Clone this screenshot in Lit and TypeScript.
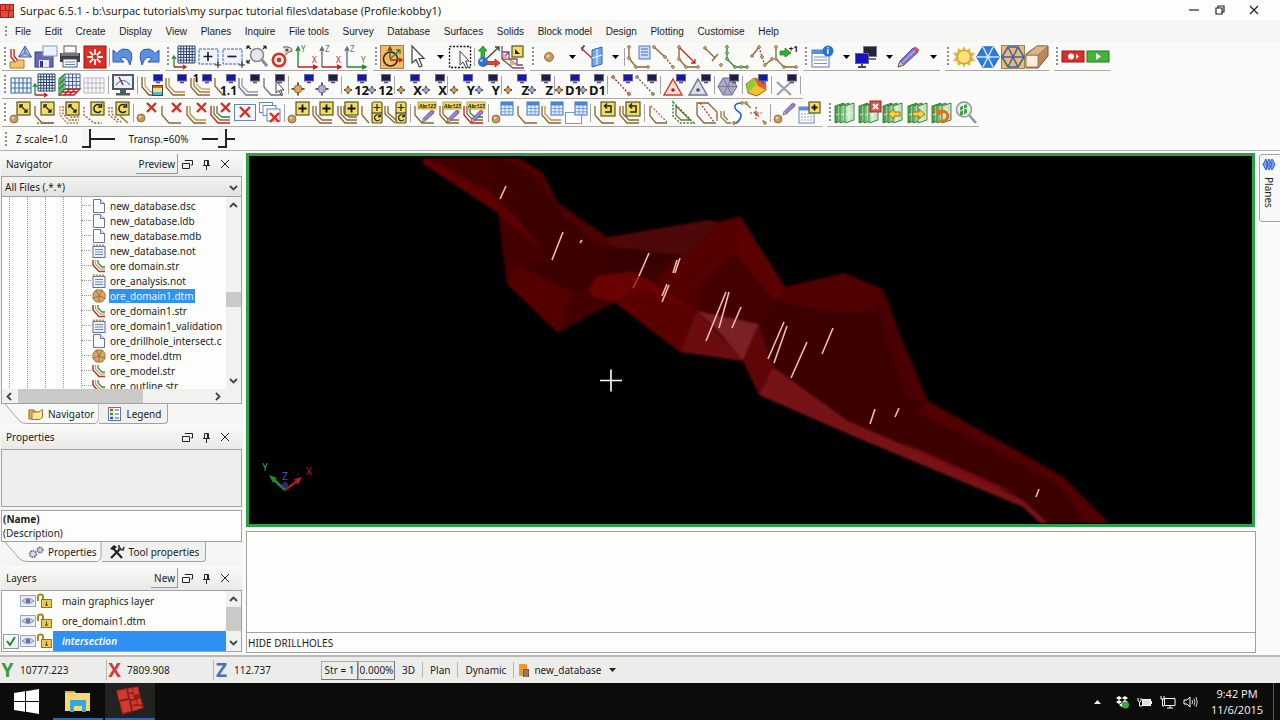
import { LitElement, html, svg, css, nothing } from "lit";
import { customElement, property } from "lit/decorators.js";
import { classMap } from "lit/directives/class-map.js";

/* ---------- icon building blocks (24 x 24 grid) ---------- */
const BR = "#8a6532";
const GY = "#6c7080";
const line = (d: string, c = BR, w = 1.3, dash = "") =>
  svg`<path d=${d} fill="none" stroke=${c} stroke-width=${w} stroke-dasharray=${dash || "none"}/>`;
const bend = (cols: string[], dash = "", top = 5) =>
  cols.map((c, i) => line(`M${2 + 3 * i} ${top}V${14 - i}L${9 + 2 * i} ${22 - 3 * i}H${21}`, c, 1.3, dash));
const mon = (on: boolean) => svg`
  <rect x="13.5" y="1.5" width="9" height="6.5" fill=${on ? "#1515b8" : "#1d1d45"} stroke="#6b6c8c"/>
  <path d="M16 9.5H20" stroke="#55566a" stroke-width="1.6"/>`;
const ball = (x: number, y: number, r = 4) => svg`
  <circle cx=${x} cy=${y} r=${r} fill="#c79a61" stroke="#84602f" stroke-width=".8"/>
  <circle cx=${x - 1} cy=${y - 1} r=${r / 3} fill="#efd3a6"/>`;
const tag = (x: number, y: number, s = 13) => svg`
  <rect x=${x} y=${y} width=${s} height=${s} fill="#f1dd62" stroke="#5d5320" stroke-width="1.2"/>`;
const redX = (x: number, y: number, s = 9) =>
  svg`<path d="M${x} ${y}l${s} ${s}M${x + s} ${y}l${-s} ${s}" stroke="#dc2a20" stroke-width="2.4"/>`;
const diamond = (x: number, y: number, r: number, on: boolean) => svg`
  <path d="M${x - r} ${y}H${x + r}M${x} ${y - r}V${y + r}" stroke="#33281a" stroke-width="1.5"/>
  <circle cx=${x} cy=${y} r=${r * 0.6} fill=${on ? "#e2a45e" : "#a9aed0"} stroke=${on ? "#85551f" : "#5d6080"} stroke-width=".8"/>`;
const label = (t: string, x: number, y = 22, s = 13) =>
  svg`<text x=${x} y=${y} font-size=${s} font-weight="700" fill="#111" text-anchor="end">${t}</text>`;
const table = (x: number, y: number) => svg`
  <rect x=${x} y=${y} width="12" height="13" fill="#e8f1ff" stroke="#3f6fc4"/>
  <rect x=${x} y=${y} width="12" height="3.5" fill="#4a83dc"/>
  <path d="M${x} ${y + 6.5}h12M${x} ${y + 9.8}h12M${x + 4} ${y + 3}v10M${x + 8} ${y + 3}v10" stroke="#6f97d8" stroke-width=".9"/>`;
const pencil = (x: number, y: number, k = 1) => svg`
  <g transform="translate(${x} ${y}) scale(${k})">
    <path d="M0 20L2 14L15 1L20 5L6 18Z" fill="#8672cc" stroke="#51449a" stroke-width=".9"/>
    <path d="M15 1L17.500 -.5L21.500 3L20 5Z" fill="#d9505c"/><path d="M0 20L2 14L6 18Z" fill="#e5c58f" stroke="#6c5a35" stroke-width=".8"/>
    <path d="M4.500 15.500L17 3.500" stroke="#b9aceb" stroke-width="1.4"/></g>`;
const hexagon = (fill: string, ray: string, edge: string) => svg`
  <path d="M7 2H17L23 12L17 22H7L1 12Z" fill=${fill} stroke=${edge} stroke-width="1.6"/>
  <path d="M7 2L17 22M17 2L7 22M1 12H23" stroke=${ray} stroke-width="1.5"/>`;
const axes = (v: string, h: string, vc: string, hc: string) => svg`
  <path d="M3 22V3M1 6L3 2L5 6" fill="none" stroke=${vc} stroke-width="1.4"/>
  <path d="M3 22H21M18 20L22 22L18 24" fill="none" stroke=${hc} stroke-width="1.4"/>
  <text x="6" y="7" font-size="8" fill=${vc}>${v}</text><text x="17" y="18" font-size="8" fill=${hc}>${h}</text>`;
const gridPath = (x: number, y: number, s: number, n: number, c: string) => {
  let d = "";
  for (let i = 0; i <= n; i++) {
    const p = (s * i) / n;
    d += `M${x + p} ${y}v${s}M${x} ${y + p}h${s}`;
  }
  return line(d, c, 1);
};
const scaleTag = (x: number, y: number) => svg`${tag(x, y)}
  <path d="M${x + 3} ${y + 3}l7 7M${x + 3} ${y + 6}v-3h3M${x + 10} ${y + 7}v3h-3" fill="none" stroke="#222" stroke-width="1.3"/>`;
const rotTag = (x: number, y: number) => svg`${tag(x, y)}
  <path d="M${x + 10} ${y + 9}a4 4 0 1 1 -.5 -5.500M${x + 10.500} ${y + 1.500}v3.500h-3.500" fill="none" stroke="#222" stroke-width="1.5"/>`;
const plusTag = (x: number, y: number, s = 13) => svg`${tag(x, y, s)}
  <path d="M${x + s / 2} ${y + 2.500}v${s - 5}M${x + 2.500} ${y + s / 2}h${s - 5}" stroke="#111" stroke-width="1.8"/>`;
const undoTag = svg`${tag(8, 1, 14)}
  <path d="M12 5H18V11H12M14 2.500L11.500 5L14 7.500" fill="none" stroke="#222" stroke-width="1.5"/>`;
const plusRot = svg`<rect x="12" y="1" width="10" height="21" rx="2" fill="#f1dd62" stroke="#5d5320" stroke-width="1.2"/>
  <path d="M17 3V10M13.500 6.500H20.500M12 12H22M20 18.500a3 3 0 1 1 0 -3.500M20.300 13.200v2.400h-2.300" fill="none" stroke="#222" stroke-width="1.2"/>`;
const abc = svg`<rect x="5" y="1" width="18" height="7" fill="#f1dd62" stroke="#a8953a" stroke-width=".8"/>
  <text x="6" y="7" font-size="5" font-style="italic" font-weight="700" fill="#222">Abc123</text>${pencil(9, 9, 0.6)}`;
const sections = svg`
  ${[0, 5, 10].map((x, i) => svg`<path d="M${1 + x} 5L${10 + x} 2V19L${1 + x} 22Z" fill=${["#4f9f4c", "#7cc07a", "#c3e6c2"][i]} stroke="#2f7a34" stroke-width=".9"/>
  <path d="M${2 + x} 14L${9 + x} 11M${5 + x} 5V20" stroke="#eafbe9" stroke-width=".9"/>`)}`;
const nodeDots = (pts: number[][], c = BR) => pts.map(([x, y]) => svg`<circle cx=${x} cy=${y} r="1.4" fill="#d8b98a" stroke=${c} stroke-width=".8"/>`);

const R = "#c02020", GN = "#1e8a2e";
const icons: Record<string, unknown> = {
  open: svg`${line("M2 4V12L6 17M5 4V11L9 16", R, 1.4)}<path d="M1 17H7L9 15H15V23H1Z" fill="#f2c56a" stroke="#b07a28"/>
    <path d="M16 1L22.500 12H9.500Z" fill="#aebfe4" stroke="#4563ad"/><path d="M16 2V8L10 12M16 8L22 12" fill="none" stroke="#4563ad"/>`,
  save: svg`<rect x="1" y="7" width="18" height="15" fill="#6a68b8" stroke="#3b3a80"/><rect x="5" y="15" width="10" height="7" fill="#e6e6f4"/>
    <rect x="6" y="16" width="3" height="6" fill="#3b3a80"/><rect x="9" y="1" width="14" height="10" fill="#eef3ff" stroke="#7d95c8"/>`,
  print: svg`<rect x="6" y="1" width="12" height="7" fill="#fff" stroke="#555"/><path d="M2 8H22V17H2Z" fill="#3e3e42"/><rect x="3" y="8" width="18" height="3" fill="#77777c"/>
    <rect x="5" y="14" width="14" height="8" fill="#fff" stroke="#555"/><path d="M7 17H17M7 19.500H17" stroke="#5a86c8"/>`,
  reset: svg`<rect x="1" y="1" width="22" height="22" fill="#e02c22" stroke="#9c120c"/><path d="M12 4V20M4 12H20M6.500 6.500L17.500 17.500M17.500 6.500L6.500 17.500" stroke="#fff" stroke-width="1.8"/><circle cx="12" cy="12" r="2.4" fill="#e02c22"/>`,
  undo: svg`<path d="M1 5V17H12L8.500 13.500Q14 9 18 20Q24 3 11 4Q7 5 5 8.500Z" fill="#5b8fe0" stroke="#2b5bb0"/>`,
  redo: svg`<path d="M23 5V17H12L15.500 13.500Q10 9 6 20Q0 3 13 4Q17 5 19 8.500Z" fill="#5b8fe0" stroke="#2b5bb0"/>`,
  gridaxes: svg`${gridPath(6, 1, 17, 6, "#27406e")}${line("M2 22V12M0 14L2 11L4 14", GN)}${line("M2 22H13M11 20L14 22L11 24", R)}`,
  zoomin: svg`<rect x="2" y="4" width="19" height="15" fill="#eef4ff" stroke="#3e62b0" stroke-dasharray="3 1"/><path d="M11 7V16M6.500 11.500H15.500" stroke="#222" stroke-width="1.7"/><path d="M21 16V23M18 20H24" stroke="#222"/>`,
  zoomout: svg`<rect x="2" y="4" width="19" height="15" fill="#eef4ff" stroke="#3e62b0" stroke-dasharray="3 1"/><path d="M6.500 11.500H15.500" stroke="#222" stroke-width="1.7"/><path d="M21 16V23M18 20H24" stroke="#222"/>`,
  zoomall: svg`<circle cx="11" cy="10" r="6.5" fill="#e6e8ee" stroke="#8a8c94" stroke-width="1.6"/><path d="M16 15L21 21" stroke="#8a8c94" stroke-width="3"/>
    <path d="M1 1L5 4M1 1H4M1 1V4M20 1L17 4M20 1V4M20 1H17M1 18L4 15M1 18V15M1 18H4" stroke="#222" stroke-width="1.2" fill="none"/>`,
  target: svg`<circle cx="9" cy="15" r="7.5" fill="#dd3326"/><circle cx="9" cy="15" r="4.8" fill="#fff"/><circle cx="9" cy="15" r="2.4" fill="#dd3326"/><path d="M13 2Q22 1 22 6Q18 7 15 10" fill="#f3d8c8" stroke="#7a4a40"/><circle cx="17" cy="5" r="1.6" fill="#34508a"/>`,
  yx: axes("Y", "X", GN, R), zx: axes("Z", "X", "#68707c", R), zy: axes("Z", "Y", "#68707c", GN),
  rotate: svg`<circle cx="10.500" cy="14" r="7" fill="none" stroke="#30240c" stroke-width="1.6"/>${line("M10 14V3M8 6L10 2L12 6", "#6a4a12")}${line("M10 15H22M19 13L22 15L19 17", R)}${line("M10 14L20 5M16 5H20V9", GN)}`,
  arrow: svg`<path d="M7 1V18L11 14.500L14.500 22L17 21L14 13.500H19Z" fill="#fff" stroke="#444" stroke-width="1.2"/>`,
  marquee: svg`<rect x="1.500" y="1.500" width="21" height="21" fill="none" stroke="#111" stroke-width="1.3" stroke-dasharray="2 1.5"/><path d="M12 6V20L15 17L18 23L20 22L17.500 16H21Z" fill="#fff" stroke="#444"/>`,
  triad: svg`${line("M7 16L22 2M18 2H22V6", "#444", 1.4)}<path d="M6 1L10 6H7.500V14H4V6H1.500Z" fill="#2fb52f" stroke="#14701a" stroke-width=".7"/><path d="M23 18L18 22V19.500H9V16.500H18V14Z" fill="#ee3f27" stroke="#a01a0e" stroke-width=".7"/><circle cx="6" cy="17" r="5" fill="#2871cc"/><circle cx="4.500" cy="15.500" r="1.500" fill="#9dc6f6"/>`,
  fold: svg`${line("M1 1V14L12 23H23M1 7H8V14H16V20H22M1 14H8L16 20M8 7L1 14", "#7a4a86", 1.3)}<path d="M2 8L8 14H2ZM9 14L16 20L9 20Z" fill="#dfb473"/>${tag(11, 1, 11)}<path d="M14 9V4L19 9Z" fill="#222"/>`,
  point: ball(12, 12, 4.5),
  plane: svg`${line("M1 3L12 13", R, 1.2)}<path d="M1 3L5 1M2 6L4 0" stroke="#333"/><path d="M12 5L22 2V19L12 22Z" fill="#6fa8ec" stroke="#2b62b8"/>${line("M17 4V20M12 13L22 10", "#fff", 1)}`,
  strlist: svg`${line("M2 2V13L9 22H21", BR)}${nodeDots([[2, 2], [2, 13], [9, 22], [21, 22]])}<rect x="12" y="1" width="11" height="13" fill="#cfdcf5" stroke="#5577bb"/>${line("M14 4H21M14 7H21M14 10H21", "#4a69ad", 1)}`,
  seg: svg`${line("M2 2L13 12", BR)}${line("M13 12L21 22", R, 1.2, "2 1.5")}${nodeDots([[2, 2], [13, 12], [21, 22]])}`,
  tri: svg`${line("M3 2V14L10 22H22", BR)}${line("M3 2L19 18M19 14V18H15", R)}${nodeDots([[3, 2], [3, 14], [10, 22], [22, 22]])}`,
  perp: svg`${line("M4 3L14 13M11 16L17 9", BR, 1.4)}${nodeDots([[4, 3], [20, 20]])}`,
  green: svg`${line("M2 2V14L10 22H22", GN)}${nodeDots([[2, 2], [2, 8], [2, 14], [10, 22], [16, 22], [22, 22]], GN)}`,
  zig: svg`${line("M2 11L9 2", BR)}${line("M9 2L12 12L15 20", R, 1.2, "2 1.5")}${line("M15 20L22 14", BR)}${nodeDots([[2, 11], [9, 2], [12, 12], [15, 20], [22, 14]])}`,
  plus1: svg`${line("M2 2V14L10 22H22", BR)}${nodeDots([[2, 2], [2, 14], [10, 22], [22, 22]])}<path d="M6 6H11V3L17 8L11 12V10H6Z" fill="#2fb52f" stroke="#14701a" stroke-width=".7"/>${label("+1", 24, 7, 8)}`,
  info: svg`<rect x="2" y="5" width="17" height="17" fill="#fff" stroke="#5577bb"/><rect x="2" y="5" width="17" height="4" fill="#5a8ee0"/>${line("M4 12H17M4 15H17M4 18.500H17", "#7891c4", 1)}<circle cx="18" cy="6" r="5.500" fill="#2675cf"/><text x="16.500" y="9" font-size="8" font-weight="700" fill="#fff">i</text>`,
  monitors: svg`<rect x="9.500" y="1.500" width="13" height="10" fill="#23233c" stroke="#77778c"/>${line("M13 14H22", "#555", 1.6)}<rect x="1.500" y="8.500" width="13" height="10" fill="#1414c4" stroke="#66667a"/>${line("M4 22H12M8 19V22", "#444", 1.8)}`,
  pencil: pencil(1, 2, 1),
  sun: svg`<path d="M12 1L14 5.500L18 3L18.500 7.500L23 8L20 12L23 16L18.500 16.500L18 21L14 18.500L12 23L10 18.500L6 21L5.500 16.500L1 16L4 12L1 8L5.500 7.500L6 3L10 5.500Z" fill="#e3b33c"/><circle cx="12" cy="12" r="6.500" fill="#fbe27a" stroke="#cf9a2a"/>`,
  hexblue: hexagon("#2a7be6", "#d9e9ff", "#2a6fd4"), hexwire: hexagon("none", "#2f66b8", "#2f66b8"),
  block: svg`<path d="M1 9L12 1H23V11L13 23H1Z" fill="#b98957" stroke="#7a5530"/><path d="M1 10H13V22H1Z" fill="#fbeedd" stroke="#a07a50"/><path d="M1 10L12 1H23L13 10Z" fill="#dcb489" stroke="#a07a50"/>`,
  record: svg`<rect x="1" y="6" width="22" height="11" fill="#df2e26" stroke="#9a1510"/><circle cx="10" cy="11.500" r="3" fill="#fff"/><path d="M15 9L18 11.500L15 14Z" fill="#fff"/>`,
  play: svg`<rect x="1" y="6" width="22" height="11" fill="#41b43a" stroke="#1f7a1c"/><path d="M10 8L15 11.500L10 15Z" fill="#fff"/>`,

  grid: svg`<path d="M2 5H22V20H2ZM2 10H22M2 15H22M6 5V20M10 5V20M14 5V20M18 5V20" fill="#f4f8ff" stroke="#4169ad" stroke-width="1.100"/>`,
  gridaxes2: svg`${gridPath(5, 1, 17, 6, "#27406e")}${line("M2 22V12M0 14L2 11L4 14", GN)}${line("M2 22H13M11 20L14 22L11 24", R)}`,
  grid3: svg`${gridPath(7, 1, 15, 4, "#3e62a8")}${line("M7 1L1 6V22L7 16M5 3V18M3 5V20M1 11L7 6M1 16L7 11", GN)}${line("M1 22H16L22 16H7M6 22L12 16M11 22L17 16M4 19H19", R)}`,
  gridoff: svg`<path d="M2 5H22V20H2ZM2 10H22M2 15H22M6 5V20M10 5V20M14 5V20M18 5V20" fill="none" stroke="#b4b7bd"/>`,
  gauge: svg`<rect x="2" y="2" width="20" height="14" fill="#e6f2fc" stroke="#555a66" stroke-width="2"/>${line("M5 12Q12 3 19 12", "#4a7fc0", 1.2)}${line("M12 12L8 4", R, 1.6)}<path d="M9 17H15V20H19V22.500H5V20H9Z" fill="#555a66"/>`,
  s1: svg`${bend(["#7a5a22", "#c9a56a"], "", 4)}${mon(true)}<rect x="12.500" y="12.500" width="10" height="10" fill="#f4e561" stroke="#444"/><path d="M13 13H22V15H13Z" fill="#e8503a"/><path d="M13 19H22V22H13Z" fill="#58b4e0"/>`,
  s2: svg`${bend([BR, "#c08a40"])}${mon(true)}`,
  s3: svg`${bend([BR, "#a6783a", "#cfa86c"])}${label("1", 10, 9, 11)}${mon(true)}`,
  s4: svg`${line("M2 5V13L10 22H13", BR)}${mon(true)}${label("1.1", 24, 22, 12)}`,
  s5: svg`${bend([GY, "#9498a8"])}${mon(false)}`,
  s6: svg`${line("M2 5V14L9 22H21", GY)}${mon(false)}<path d="M14 8V20L17 17.500L19 22L20.500 21.500L18.500 17H22Z" fill="#fff" stroke="#444"/>`,
  p1: svg`${diamond(7, 16, 6.5, true)}${mon(true)}`, p0: svg`${diamond(7, 16, 6.5, false)}${mon(false)}`,
  dash1: svg`${line("M3 4L19 21", R, 1.3, "2 1.5")}${nodeDots([[3, 4], [19, 21]], R)}${mon(true)}`,
  dash0: svg`${line("M3 4L19 21", "#555a66", 1.3, "2 1.5")}${nodeDots([[3, 4], [19, 21]], "#555a66")}${mon(false)}`,
  t1: svg`<path d="M10 6L19 22H1Z" fill="#fde0da" stroke="#cf3a2c" stroke-width="1.4"/><circle cx="10" cy="17" r="1.800" fill="#a02020"/>${mon(true)}`,
  t0: svg`<path d="M10 6L19 22H1Z" fill="#dcdde6" stroke="#70748a" stroke-width="1.4"/><circle cx="10" cy="17" r="1.800" fill="#444a66"/>${mon(false)}`,
  hexgrey: svg`<path d="M7 5H16L21 13.500L16 22H7L2 13.500Z" fill="#a9abc6" stroke="#6c6e92"/>${line("M7 5L16 22M16 5L7 22M2 13.500H21", "#757799", 1)}${mon(false)}`,
  hexrain: svg`<path d="M1 11L9 5L20 8L21 17L12 23L3 20Z" fill="#f2c22c" stroke="#8a6a22"/><path d="M1 11L9 5L11 12L3 20Z" fill="#8fc83c"/><path d="M9 5L20 8L21 17L13 13Z" fill="#ee5a2a"/>${mon(true)}`,
  xoff: svg`${line("M3 9L17 22M17 9L3 22", "#9a9fb6", 2.2)}${mon(false)}`,

  sc1: svg`${ball(5, 18)}${scaleTag(8, 1)}`, sc2: svg`${bend([BR])}${line("M4 22H20", BR, 1.3, "2 1.5")}${scaleTag(8, 1)}`,
  sc3: svg`${bend(["#b98546", BR, BR], "2 1.2")}${scaleTag(8, 1)}`,
  ro1: svg`${line("M2 6V14L12 22H20", BR, 1.3, "2 1.5")}${rotTag(9, 1)}`, ro2: svg`${line("M2 6V14L12 22M5 6V13L15 22", BR, 1.3, "2 1.5")}${line("M13 15L21 22", "#a08020", 1.6)}${rotTag(9, 1)}`,
  x1: svg`${ball(5, 17)}${redX(11, 2)}`, x2: svg`${bend([BR])}${redX(12, 2)}`, x3: svg`${bend([BR, "#c08a40"])}${redX(12, 2)}`, x4: svg`${bend([R, BR, GN])}${redX(12, 2)}`,
  x5: svg`<rect x="1.500" y="3.500" width="21" height="16" fill="#f4f8ff" stroke="#6487c4"/>${redX(7, 6, 10)}`,
  x6: svg`<rect x="1.500" y="1.500" width="13" height="10" fill="#fff" stroke="#6487c4"/><rect x="5" y="4.500" width="13" height="10" fill="#fff" stroke="#6487c4"/><rect x="9" y="8" width="13" height="12" fill="#f4f8ff" stroke="#6487c4"/>${redX(12, 12, 9)}`,
  a1: svg`${ball(5, 18)}${plusTag(9, 1)}`, a2: svg`${bend([BR, BR])}${plusTag(9, 1)}`, a3: svg`${bend([BR, BR, BR])}${plusTag(9, 1)}`,
  a4: svg`${line("M2 5V14L9 22", BR)}${plusRot}`, a5: svg`${line("M1 5V13L11 22M4 5V12L12 19", BR)}${plusRot}`,
  b1: svg`${bend([BR])}${abc}`, b2: svg`${bend([BR, BR])}${abc}`, b3: svg`${bend([R, BR, GN])}${abc}`,
  c1: svg`${ball(5, 18)}${table(10, 1)}`, c2: svg`${bend([BR])}${table(11, 1)}`, c3: svg`${bend([BR, "#c08a40"])}${table(11, 1)}`,
  c4: svg`<rect x="1.500" y="11.500" width="16" height="11" fill="#fff" stroke="#7a98cc"/>${table(11, 1)}`,
  d1: svg`${bend([BR])}${undoTag}`, d2: svg`${bend([BR, BR])}${undoTag}`,
  e1: svg`${line("M3 5V15L9 22H20", BR)}${line("M4 5L20 21", "#d04060", 1.2, "2 1.5")}`,
  e2: svg`${line("M5 5V14L10 19H19Z", BR)}${line("M2 1L23 22H9L2 15Z", GN, 1.4, "2 1.5")}`,
  e3: svg`${line("M2 14V2H13L22 11V20M2 14L9 22H21", BR)}${line("M5 2L19 21", R, 1.2, "2 1.5")}`,
  e4: svg`${line("M1 10V16L7 22H11M4 10V15L8 19", "#8a7a3a")}${line("M22 2C12 2 14 8 19 11S18 23 14 22", "#2b66c0", 1.6)}${nodeDots([[22, 2], [14, 22]])}`,
  e5: svg`${line("M2 2L21 22", BR, 1.3, "7 5")}${line("M12 6V18M6 12H18", R, 1.2, "2 1.500")}${nodeDots([[2, 2], [21, 22]])}`,
  f1: svg`${ball(5, 18)}${pencil(10, 2, 0.6)}`,
  f2: svg`<rect x="1" y="6" width="15" height="16" fill="#fff" stroke="#6487c4"/><rect x="1" y="6" width="15" height="3.500" fill="#5a8ee0"/>${line("M3 13H14M3 16H14M3 19H14", "#8aa0cc", 1, "2 1")}${plusTag(11, 1, 11)}`,
  g1: sections,
  g2: svg`${sections}<rect x="12" y="0" width="11" height="11" fill="#e05048" stroke="#a02a20"/>${line("M15 3L20 8M20 3L15 8", "#fff", 2)}`,
  g3: svg`${sections}<path d="M6 13L12 8V11H18V15H12V18Z" fill="#fbd335" stroke="#9a7410"/>`,
  g4: svg`${sections}<path d="M18 13L12 8V11H6V15H12V18Z" fill="#fbd335" stroke="#9a7410"/>`,
  g5: svg`${sections}${line("M9 20H13A5 5 0 1 0 9 11", "#ec6a1c", 3)}<path d="M5 7L6 15L13 12Z" fill="#ec6a1c"/>`,
  g6: svg`<circle cx="9" cy="8.500" r="7.500" fill="#e9efec" stroke="#8f959c" stroke-width="1.5"/><path d="M5 6L12 3V12L5 15Z" fill="#46a04a"/>${line("M5 10L12 7M8.500 4V13", "#e6ffe6", 1)}${line("M14 14L21 22", "#8f959c", 2.600)}`,
};
for (const t of ["12", "X", "Y", "Z", "D1"]) {
  const dx = t === "D1" ? 2 : 4;
  icons["v1" + t] = svg`${diamond(dx, 17, 4, true)}${mon(true)}${label(t, 25)}`;
  icons["v0" + t] = svg`${diamond(dx, 17, 4, false)}${mon(false)}${label(t, 25)}`;
}

/* ---------- toolbars: "|" is a divider, "v" a drop-down arrow, "*" marks a pressed tool ---------- */
type Bar = { width: number; items: string };
const toolRows: Bar[][] = [
  [
    { width: 158, items: "open save print reset | undo redo" },
    { width: 203, items: "gridaxes zoomin zoomout zoomall target yx zx zy" },
    { width: 152, items: "rotate* arrow v marquee | triad fold" },
    { width: 268, items: "point v plane v | strlist seg tri perp green zig plus1" },
    { width: 137, items: "info v monitors v pencil v" },
    { width: 104, items: "sun hexblue hexwire* block" },
    { width: 56, items: "record play" },
  ],
  [
    {
      width: 801,
      items:
        "grid gridaxes2 grid3 gridoff | gauge | s1 s2 s3 s4 s5 s6 | p1 p0 | v112 v012 | v1X v0X | v1Y v0Y | v1Z v0Z | v1D1 v0D1 | dash1 dash0 | t1 t0 | hexgrey | hexrain | xoff |",
    },
  ],
  [
    {
      width: 820,
      items: "sc1 sc2 sc3 ro1 ro2 | x1 x2 x3 x4 x5 x6 | a1 a2 a3 a4 a5 | b1 b2 b3 | c1 c2 c3 c4 | d1 d2 | e1 e2 e3 e4 e5 | f1 f2",
    },
    { width: 152, items: "g1 g2 g3 g4 g5 g6" },
  ],
];

const base = css`
  :host { box-sizing: border-box; }
  *, *::before, *::after { box-sizing: border-box; }
  button, select, input, textarea { font: inherit; color: inherit; margin: 0; padding: 0; border: 0; background: none; border-radius: 0; outline: none; }
  svg { display: block; }
`;

@customElement("tool-bars")
class ToolBars extends LitElement {
  static styles = [base, css`
    :host { display: block; }
    .row { display: flex; gap: 5px; padding-left: 2px; height: 28px; }
    .bar { display: flex; gap: 3px; padding: 2px 0 1px 2px; border-bottom: 1px solid #a9aaa8; }
    .grip { width: 2px; margin: 2px 0; background: repeating-linear-gradient(#8f908e 0 2px, transparent 2px 4px); }
    .items { flex: 1; display: flex; justify-content: space-between; }
    .tool { width: 24px; height: 24px; flex: none; }
    .tool svg { width: 24px; height: 24px; overflow: visible; }
    .on { background: #f5b869; border: 1px solid #a08050; }
    .on svg { margin: -1px; }
    .sep { width: 4px; flex: none; display: flex; justify-content: center; }
    .sep::before { content: ""; width: 1px; margin: 3px 0; background: #a4a5a3; }
    .drop { width: 18px; display: flex; align-items: center; justify-content: flex-end; padding-right: 3px; }
    text { font-family: "Noto Sans", sans-serif; }
  `];
  private item(token: string) {
    if (token === "|") return html`<span class="sep"></span>`;
    if (token === "v")
      return html`<button class="drop" aria-label="More"><svg width="7" height="4"><path d="M0 0H7L3.500 4Z"/></svg></button>`;
    const on = token.endsWith("*");
    const name = on ? token.slice(0, -1) : token;
    return html`<button class=${classMap({ tool: true, on })} aria-label=${name}><svg viewBox="0 0 24 24">${icons[name]}</svg></button>`;
  }
  render() {
    return toolRows.map(
      (row) => html`<div class="row">${row.map(
        (bar) => html`<div class="bar" role="toolbar" style="width:${bar.width}px"><span class="grip"></span><div class="items">${bar.items.split(" ").map((t) => this.item(t))}</div></div>`
      )}</div>`
    );
  }
}

@customElement("dock-head")
class DockHead extends LitElement {
  @property() label = "";
  @property() action = "";
  static styles = [base, css`
    :host { display: flex; flex: none; align-items: center; height: 24px; padding: 0 7px 0 5px; background: linear-gradient(#fafbf9, #e9eae8); }
    .label { flex: 1; }
    .action { height: 20px; padding: 0 2px 0 3px; border-right: 1px solid #999; border-bottom: 1px solid #999; }
    .ctl { width: 19px; height: 16px; display: grid; place-items: center; }
    path { fill: none; stroke: #222; }
  `];
  render() {
    const paths = ["M.5 4.500H7.500V9.500H.5ZM3 2V1.500H10.500V6H9", "M3.500 1.500H7.500V6.500H3.500ZM6.500 1V6M2 6.500H9M5.500 7V11", "M1 1L9 9M9 1L1 9"];
    const names = ["Float", "Pin", "Close"];
    return html`<span class="label">${this.label}</span>
      ${this.action ? html`<button class="action">${this.action}</button>` : nothing}
      ${paths.map((d, i) => html`<button class="ctl" aria-label=${names[i]}><svg width="11" height="11"><path d=${d}/></svg></button>`)}`;
  }
}

const chevron = (dir: "up" | "down" | "left" | "right") => {
  const d = { up: "M1 6L4.500 2.500L8 6", down: "M1 3L4.500 6.500L8 3", left: "M6 1L2.500 4.500L6 8", right: "M3 1L6.500 4.500L3 8" }[dir];
  return html`<svg width="9" height="9"><path d=${d} fill="none" stroke="#444" stroke-width="1.800"/></svg>`;
};

const fileIcons: Record<string, unknown> = {
  doc: svg`<path d="M1.500 .5H8.500L12.500 4.500V13.500H1.500Z" fill="#fbfcff" stroke="#6b7390"/><path d="M8.500 .5V4.500H12.500" fill="#dfe6f4" stroke="#6b7390"/>`,
  not: svg`<rect x="1" y="2.500" width="12" height="11" fill="#eef3fb" stroke="#5b6da0"/><path d="M1 1.500H13" stroke="#a89850" stroke-width="2" stroke-dasharray="2 1"/><path d="M3 5.500H11M3 8H11M3 10.500H11" stroke="#6c87c0"/>`,
  str: svg`<path d="M1 1V6L7 12.500H13" stroke="#b03a2a" fill="none" stroke-width="1.500"/><path d="M3.500 1V5L8.500 10.200H13" stroke="#c9a070" fill="none" stroke-width="1.300"/><path d="M6 1V4L10 8H13" stroke="#3f8a3f" fill="none" stroke-width="1.300"/>`,
  dtm: svg`<path d="M4 1H10L13 4.500V9.500L10 13H4L1 9.500V4.500Z" fill="#d8a468" stroke="#a8743c"/><path d="M4 1L7 7L10 1M1 9.500L7 7L13 9.500M7 7V13" stroke="#96642e" stroke-width=".8" fill="none"/>`,
};
const files: [string, string][] = [
  ["doc", "new_database.dsc"], ["doc", "new_database.ldb"], ["doc", "new_database.mdb"], ["not", "new_database.not"],
  ["str", "ore domain.str"], ["not", "ore_analysis.not"], ["dtm", "ore_domain1.dtm"], ["str", "ore_domain1.str"],
  ["not", "ore_domain1_validation"], ["doc", "ore_drillhole_intersect.c"], ["dtm", "ore_model.dtm"], ["str", "ore_model.str"], ["str", "ore_outline.str"],
];
const layers = ["main graphics layer", "ore_domain1.dtm", "intersection"];

@customElement("side-docks")
class SideDocks extends LitElement {
  static styles = [base, css`
    :host { display: flex; flex-direction: column; padding: 1px 1px 3px; background: #f5f6f4; min-height: 0; }
    .combo { position: relative; display: block; }
    .combo select { display: block; width: 100%; height: 21px; padding-left: 3px; border: 1px solid #a2a3a1; background: linear-gradient(#f2f3f1, #e2e3e1); appearance: none; }
    .combo svg { position: absolute; right: 4px; top: 7px; }
    .tree { flex: 1; min-height: 0; display: grid; grid-template: minmax(0, 1fr) 14px / minmax(0, 1fr) 15px; background: #fdfefc; border: 1px solid #a2a3a1; border-top: 0; }
    .files { margin: 0; padding: 1px 0 0; list-style: none; overflow: hidden;
      background: repeating-linear-gradient(#999 0 1px, transparent 1px 2px) 7px 0 / 1px 100% no-repeat,
        repeating-linear-gradient(#999 0 1px, transparent 1px 2px) 25px 0 / 1px 100% no-repeat,
        repeating-linear-gradient(#999 0 1px, transparent 1px 2px) 43px 0 / 1px 100% no-repeat,
        repeating-linear-gradient(#999 0 1px, transparent 1px 2px) 61px 0 / 1px 100% no-repeat,
        repeating-linear-gradient(#999 0 1px, transparent 1px 2px) 79px 0 / 1px 100% no-repeat; }
    .file { display: flex; align-items: center; height: 15px; padding-left: 79px; white-space: nowrap; }
    .file::before { content: ""; flex: none; width: 10px; border-top: 1px dotted #999; }
    .file svg { flex: none; margin: 0 3px 0 1px; }
    .name { padding: 0 1px; line-height: 14px; }
    .sel { background: #3191f2; color: #e8f4ff; }
    .vbar { display: flex; flex-direction: column; align-items: center; justify-content: space-between; background: #f1f2f0; padding: 4px 0; }
    .hbar { display: flex; align-items: center; justify-content: space-between; background: #f1f2f0; padding: 0 4px 0 3px; grid-column: 1; }
    .thumb { background: #c9cac8; }
    .vbar .thumb { width: 100%; height: 15px; margin-top: 82px; margin-bottom: auto; }
    .hbar .thumb { width: 125px; height: 100%; margin-left: 4px; margin-right: auto; }
    .corner { background: #f1f2f0; }
    .tabs { display: flex; flex: none; height: 21px; padding-left: 4px; }
    .tab { position: relative; display: flex; align-items: center; gap: 4px; height: 20px; padding: 0 6px 0 7px; border: 1px solid #a2a3a1; border-top: 0; border-left: 0; border-radius: 0 0 4px; background: #f0f1ef; }
    .tab.front { padding-left: 23px; padding-right: 5px; border: 0; background: none; }
    .slant { position: absolute; inset: 0; width: 100%; height: 100%; }
    .tab span { position: relative; }
    .tab .pic { position: relative; }
    .blank { flex: none; height: 58px; border: 1px solid #a2a3a1; background: #eeefed; }
    .desc { flex: none; height: 32px; margin-top: 3px; padding: 1px 1px; border: 1px solid #a2a3a1; background: #fdfefc; line-height: 14px; }
    .desc p { margin: 0; }
    .tabs.low { margin-bottom: 3px; }
    .layers { flex: none; display: grid; grid-template-columns: 1fr 15px; height: 62px; border: 1px solid #a2a3a1; background: #fdfefc; }
    .layer { display: flex; align-items: center; height: 20px; }
    .tick { width: 18px; height: 15px; appearance: none; flex: none; }
    .tick:checked { margin-left: 1px; width: 16px; border: 1px solid #8d9bb0; background: linear-gradient(#fff, #e8f2e8); }
    .tick-cell { position: relative; width: 18px; height: 15px; flex: none; display: flex; }
    .tick-cell svg { position: absolute; left: 4px; top: 2px; pointer-events: none; }
    .lname { flex: 1; height: 20px; line-height: 20px; margin-left: 1px; padding-left: 9px; }
    .cur { background: #3191f2; color: #fff; font-style: italic; font-weight: 600; }
    .lvbar { display: flex; flex-direction: column; align-items: center; background: #f1f2f0; padding: 4px 0; gap: 3px; }
    .lvbar .thumb { width: 100%; flex: 1; margin-bottom: 4px; }
  `];
  private tabs(low: boolean, a: string, ai: unknown, b: string, bi: unknown) {
    return html`<div class=${classMap({ tabs: true, low })} role="tablist">
      <button class="tab front" role="tab" aria-selected="true">
        <svg class="slant" viewBox="0 0 97 20" preserveAspectRatio="none"><path d="M0 0L15 17Q18 19.500 22 19.500H93L96.500 16V0" fill="#f8f9f7" stroke="#a2a3a1"/></svg>
        <svg class="pic" width="16" height="14">${ai}</svg><span>${a}</span></button>
      <button class="tab" role="tab"><svg class="pic" width="16" height="14">${bi}</svg><span>${b}</span></button></div>`;
  }
  render() {
    return html`
      <dock-head label="Navigator" action="Preview"></dock-head>
      <label class="combo"><select aria-label="File filter"><option>All Files (.*.*)</option></select>${chevron("down")}</label>
      <div class="tree">
        <ul class="files">${files.map(([k, n]) => html`<li class="file"><svg width="14" height="14">${fileIcons[k]}</svg><span class=${classMap({ name: true, sel: n === "ore_domain1.dtm" })}>${n}</span></li>`)}</ul>
        <div class="vbar">${chevron("up")}<span class="thumb"></span>${chevron("down")}</div>
        <div class="hbar">${chevron("left")}<span class="thumb"></span>${chevron("right")}</div><span class="corner"></span>
      </div>
      ${this.tabs(false, "Navigator",
        svg`<path d="M1 3H6L8 5H12V12H1Z" fill="#e8b850" stroke="#8a6420"/><path d="M4 5H11L14.500 2.500V10L12 12.500H4Z" fill="#fbe6a0" stroke="#a07a30"/>`,
        "Legend",
        svg`<rect x="2.500" y=".5" width="12" height="13" fill="#fff" stroke="#5b78a8"/><path d="M4 3H7" stroke="#d03a30" stroke-width="2.500"/><path d="M4 7H7" stroke="#3a9a3a" stroke-width="2.500"/><path d="M4 11H7" stroke="#2b5bc0" stroke-width="2.500"/><path d="M8.500 3H13M8.500 7H13M8.500 11H13" stroke="#555"/>`)}
      <dock-head label="Properties"></dock-head>
      <div class="blank"></div>
      <div class="desc"><p><b>(Name)</b></p><p>(Description)</p></div>
      ${this.tabs(true, "Properties",
        svg`<circle cx="5" cy="9" r="3.200" fill="#dde" stroke="#70758a" stroke-width="2" stroke-dasharray="1.600 .8"/><circle cx="12" cy="5" r="2.600" fill="#dde" stroke="#70758a" stroke-width="2" stroke-dasharray="1.400 .7"/>`,
        "Tool properties",
        svg`<path d="M2 13L12 3M3 2L13 13" stroke="#222" stroke-width="2.200"/><path d="M1 4L5 0L8 2L4 5Z" fill="#222"/><path d="M10 0L10 4L14 5L15 2" fill="none" stroke="#444" stroke-width="1.800"/>`)}
      <dock-head label="Layers" action="New"></dock-head>
      <div class="layers"><div>${layers.map((n, i) => html`<div class="layer">
        <span class="tick-cell"><input class="tick" type="checkbox" aria-label=${n} .checked=${i === 2}/>${i === 2 ? html`<svg width="10" height="10"><path d="M1 5L4 9L9 1" fill="none" stroke="#1d8a2a" stroke-width="2"/></svg>` : nothing}</span>
        <svg width="16" height="14"><rect x=".5" y="1.500" width="15" height="11" fill="#e9edf8" stroke="#9aa6c4"/><path d="M2 7Q8 1.500 14 7Q8 12 2 7Z" fill="#cdd3ec" stroke="#8c92b8"/><circle cx="8" cy="7" r="2.300" fill="#6a6ea4"/></svg>
        <svg width="16" height="16"><path d="M2 8V3.500Q2 1.500 4.500 1.500T7 3.500V7" fill="none" stroke="#a08a28" stroke-width="2"/><rect x="5.500" y="6.500" width="10" height="8" fill="#ecca4e" stroke="#8f7620"/><path d="M10.500 8.500V12.500M9 12H12" stroke="#5a4810"/></svg>
        <span class=${classMap({ lname: true, cur: i === 2 })}>${n}</span></div>`)}</div>
        <div class="lvbar">${chevron("up")}<span class="thumb"></span>${chevron("down")}</div></div>`;
  }
}

/* ---------- 3D scene ---------- */
const facets: [string, string][] = [
  ["422,163 425,158 519,158 542,172 558,203 607,237 708,220 720,222 740,216 785,287 844,273 883,289 897,327 913,367 928,401 1062,476 1109,523 1040,523 1023,507 853,436 759,395 743,361 680,352 614,302 558,333 507,284 498,213", "#3c0000"],
  ["422,163 425,158 437,163 492,193 506,207 547,253 520,232 498,213", "#5c0000"],
  ["437,163 425,158 480,158 530,200 506,207 492,193", "#400000"],
  ["519,158 542,172 558,203 607,237 612,247 596,243 562,214 530,172 500,158", "#4c0000"],
  ["498,213 520,232 550,262 519,265 507,284", "#440000"],
  ["507,284 519,265 572,292 558,333", "#540000"],
  ["572,292 590,290 614,302 558,333", "#440000"],
  ["607,238 708,220 720,222 685,256 612,247", "#4e080a"],
  ["612,247 685,256 632,272 597,276", "#360000"],
  ["720,222 740,216 735,254 700,284 697,310 655,282 672,262 685,256", "#540000"],
  ["740,216 785,287 776,302 735,254", "#5a0202"],
  ["735,254 776,302 759,323 697,310 700,284", "#440000"],
  ["588,290 597,276 632,271 652,282 697,311 660,300 640,297 614,302 594,297", "#6a0102"],
  ["614,302 640,288 697,311 680,352", "#5a0000"],
  ["697,311 680,352 743,361", "#6b0d10"],
  ["697,311 759,324 743,361 717,330", "#792125"],
  ["759,324 743,361 759,395 773,367", "#5e0507"],
  ["773,367 848,421 920,452 972,476 1023,500 1048,523 1040,523 1023,507 853,436 759,395", "#761317"],
  ["785,287 844,273 883,289 876,312 820,311 775,300", "#500000"],
  ["883,289 897,327 928,401 906,398 878,312", "#4a0000"],
  ["928,401 1062,476 1109,523 1086,523 1058,484 1005,456 916,412", "#500000"],
  ["900,441 940,459 1020,495 985,484 930,458", "#7c0814"],
];
const holes = [
  [506, 186, 500, 199], [563, 232, 552, 260], [582, 240, 580, 243], [649, 253, 639, 276], [677, 260, 673, 273], [680, 258, 675, 273],
  [667, 284, 662, 296], [669, 285, 662, 302], [726, 292, 706, 341], [729, 292, 719, 328], [741, 307, 732, 328], [784, 322, 768, 359],
  [787, 326, 774, 363], [807, 342, 791, 378], [833, 328, 822, 354], [875, 409, 870, 424], [899, 408, 895, 417], [1039, 489, 1036, 497],
];

@customElement("scene-view")
class SceneView extends LitElement {
  static styles = [base, css`
    :host { display: block; min-height: 0; border: 3px solid #2da24a; background: #000; overflow: hidden; }
    svg { width: 100%; height: 100%; }
    .soft { filter: blur(1px); }
    text { font: 10px "Noto Sans", sans-serif; text-anchor: middle; }
  `];
  render() {
    return html`<svg viewBox="249 156 1003 368" role="img" aria-label="Ore body with drillhole intersections">
      <g class="soft">${facets.map(([p, c]) => svg`<polygon points=${p} fill=${c}/>`)}</g>
      <path d="M639 276L633 288" stroke="#b04a40" stroke-width="1.200"/>
      ${holes.map(([a, b, c, d]) => svg`<path d="M${a} ${b}L${c} ${d}" stroke="#f6b9ae" stroke-width="1.600"/>`)}
      <path d="M600 380.500H622M611 369.500V391.500" stroke="#fff" stroke-width="1.600"/>
      <path d="M285 490L273 479" stroke="#1d8c2c" stroke-width="2.500"/><path d="M269 475L277 478L273 483Z" fill="#1d8c2c"/>
      <path d="M285 490L297 481" stroke="#a41c24" stroke-width="2.500"/><path d="M302 477L294 479L298 485Z" fill="#a41c24"/>
      <circle cx="285" cy="485" r="3" fill="#2a2a78"/>
      <text x="265" y="471" fill="#35b040">Y</text><text x="285" y="480" fill="#5050c8">Z</text><text x="309" y="475" fill="#c01c24">X</text>
    </svg>`;
  }
}

const menus = ["File", "Edit", "Create", "Display", "View", "Planes", "Inquire", "File tools", "Survey", "Database", "Surfaces", "Solids", "Block model", "Design", "Plotting", "Customise", "Help"];

@customElement("app-root")
class AppRoot extends LitElement {
  static styles = [base, css`
    :host { display: flex; flex-direction: column; height: 100vh; min-height: 480px; overflow: hidden; background: #fafbf9; color: #1c1c1c; font: 10px "Noto Sans", sans-serif; }
    .title { display: flex; align-items: center; gap: 5px; height: 20px; flex: none; background: #fdfefc; font: 11px "Open Sans", sans-serif; }
    .title h1 { flex: 1; margin: 0; font: inherit; color: #111; }
    .win { width: 26px; height: 18px; display: grid; place-items: center; }
    .win.close { margin-left: 8px; }
    .win path { fill: none; stroke: #222; stroke-width: 1.2; }
    .wins { display: flex; padding-right: 13px; }
    .menu { display: flex; align-items: center; gap: 8px; height: 23px; flex: none; padding-left: 5px; font: 10px "Liberation Sans", sans-serif; background: #f6f7f5; }
    .menus { display: flex; justify-content: space-between; width: 764px; }
    .grip { width: 2px; height: 12px; background: repeating-linear-gradient(#8f908e 0 2px, transparent 2px 4px); }
    .sliders { display: flex; align-items: center; height: 24px; flex: none; padding-left: 5px; border-bottom: 1px solid #b4b5b3; }
    .sliders .grip { height: 14px; margin-right: 9px; }
    .range { appearance: none; width: 33px; height: 20px; margin: 0 14px; background: linear-gradient(#222, #222) 0 50% / 100% 2px no-repeat; }
    .range::-webkit-slider-thumb { appearance: none; width: 9px; height: 19px; background: #f4f5f3; border-right: 2px solid #222; border-bottom: 2px solid #222; }
    .work { flex: 1; min-height: 0; display: grid; grid-template-columns: 243px minmax(0, 1fr) 24px; grid-template-rows: minmax(0, 1fr); }
    .center { display: flex; flex-direction: column; min-height: 0; padding: 2px 0 2px 3px; }
    .center scene-view { flex: 1; margin-right: 1px; }
    .log { height: 102px; margin-top: 4px; padding: 2px; border: 1px solid #a2a3a1; background: #fdfefc; resize: none; }
    .cmd { height: 20px; padding: 0 1px; border: 1px solid #a2a3a1; border-top: 0; background: #fdfefc; }
    .right { padding: 3px 0 0 3px; }
    .planes { display: flex; flex-direction: column; align-items: center; gap: 6px; width: 23px; height: 68px; padding: 3px 3px 0 0; border: 1px solid #a2a3a1; border-radius: 3px 0 0 3px; background: #f8f9f7; }
    .planes span { writing-mode: vertical-rl; }
    .status { display: flex; align-items: center; height: 28px; flex: none; border-top: 2px solid #b9bab8; background: #ecedeb; }
    .coord { display: flex; align-items: center; gap: 5px; width: 107px; height: 20px; border-right: 1px solid #b4b5b3; }
    .coord b { width: 15px; font-size: 19px; line-height: 20px; text-align: center; }
    .coord:nth-child(3) { border: 0; }
    .cy { color: #3a9a3a; } .cx { color: #d03a38; } .cz { color: #4a6ec8; }
    .raised { width: 37px; height: 19px; border: 1px solid; border-color: #aaa #777 #777 #aaa; }
    .cell { height: 16px; line-height: 16px; padding: 0 7px; border-right: 1px solid #b4b5b3; }
    .db { display: flex; align-items: center; gap: 5px; padding-left: 5px; }
    .db .dn { margin-left: 3px; }
    .task { display: flex; height: 37px; flex: none; background: #0c0d0b; color: #f4f4f4; font: 11px "Open Sans", sans-serif; }
    .app { width: 50px; margin-right: 2px; display: grid; place-items: center; border-bottom: 2px solid #3763ae; }
    .start { width: 53px; display: grid; place-items: center; }
    .active { background: #222321; }
    .tray { margin-left: auto; display: flex; align-items: center; gap: 7px; padding-right: 6px; }
    .clock { display: block; width: 58px; margin-left: 3px; text-align: center; line-height: 16px; }
    .edge { width: 1px; height: 37px; background: #555; }
  `];
  render() {
    return html`
      <header class="title">
        <svg width="15" height="18"><path d="M0 3H14V17H0Z" fill="#a8201a"/><path d="M1 4H5V9H1ZM6 4H9V9H6ZM10 4H13V9H10ZM1 10H8V16H1ZM9 10H13V16H9Z" fill="#e4493c"/></svg>
        <h1>Surpac 6.5.1 - b:\\surpac tutorials\\my surpac tutorial files\\database (Profile:kobby1)</h1>
        <div class="wins">
          <button class="win" aria-label="Minimise"><svg width="10" height="10"><path d="M0 5H10"/></svg></button>
          <button class="win" aria-label="Restore"><svg width="10" height="10"><path d="M1 3H7V9H1ZM3 3V1H9V7H7"/></svg></button>
          <button class="win close" aria-label="Close"><svg width="10" height="10"><path d="M1 1L9 9M9 1L1 9"/></svg></button>
        </div>
      </header>
      <nav class="menu"><span class="grip"></span><div class="menus">${menus.map((m) => html`<button>${m}</button>`)}</div></nav>
      <tool-bars></tool-bars>
      <div class="sliders"><span class="grip"></span>
        <label for="zs">Z scale=1.0</label><input id="zs" class="range" type="range" min="0" max="100" .value=${"0"}>
        <label for="tr">Transp.=60%</label><input id="tr" class="range" type="range" min="0" max="100" .value=${"65"}>
      </div>
      <main class="work">
        <side-docks></side-docks>
        <section class="center">
          <scene-view></scene-view>
          <textarea class="log" aria-label="Messages" readonly></textarea>
          <input class="cmd" aria-label="Command" .value=${"HIDE DRILLHOLES"}>
        </section>
        <aside class="right"><button class="planes">
          <svg width="14" height="13"><path d="M4 1L1 6.500L4 12L6 6.500ZM7 1L4 6.500L7 12L10 6.500ZM10 1L7 6.500L10 12L13 6.500Z" fill="#7fa4ee" stroke="#2b5bd0"/></svg><span>Planes</span></button></aside>
      </main>
      <footer class="status">
        <span class="coord"><b class="cy">Y</b>10777.223</span><span class="coord"><b class="cx">X</b>7809.908</span><span class="coord"><b class="cz">Z</b>112.737</span>
        <button class="raised">Str = 1</button><button class="raised">0.000%</button>
        <span class="cell">3D</span><span class="cell">Plan</span><span class="cell">Dynamic</span>
        <button class="db"><svg width="10" height="13"><rect x="0" y="0" width="8" height="12" rx="1" fill="#ee9a2c"/><path d="M4 5H10V13H4Z" fill="#6c5a48"/><path d="M6 6V13M8 6V13" stroke="#b09a80"/></svg>new_database<svg class="dn" width="7" height="4"><path d="M0 0H7L3.500 4Z" fill="#222"/></svg></button>
      </footer>
      <div class="task">
        <button class="start" aria-label="Start"><svg width="26" height="25"><path d="M0 4L11 2.300V12H0ZM12 2.200L25 0V12H12ZM0 13H11V22.700L0 21ZM12 13H25V25L12 22.800Z" fill="#fff"/></svg></button>
        <button class="app" aria-label="File Explorer"><svg width="28" height="24"><path d="M1 2H10L12 4H26V22H1Z" fill="#f7d774"/><path d="M1 2H10V4H1Z" fill="#e0b040"/><path d="M6 23V12Q6 11 7 11H21Q22 11 22 12V23H18V17H10V23Z" fill="#35a8e0"/></svg></button>
        <button class="app active" aria-label="Surpac"><svg width="30" height="30"><path d="M1 4L23 0L29 22L7 29Z" fill="#8e1c17"/><path d="M2 5L11 3L13 12L4 14ZM13 3L17 2L18 6L14 7ZM18 2L23 1L24 8L19 9ZM14 8L18 8L19 13L15 13ZM5 16L14 14L16 25L8 27ZM16 15L21 14L22 18L17 19ZM22 14L25 12L27 18L23 19ZM17 20L27 20L27 22L18 25Z" fill="#cf3a30"/></svg></button>
        <div class="tray">
          <svg width="18" height="14"><path d="M4 9L7.500 5L11 9Z" fill="#eee"/></svg>
          <svg width="15" height="14"><path d="M4 1L7 3L4 5L1 3ZM10 1L13 3L10 5L7 3ZM4 5L7 7L4 9L1 7ZM10 5L13 7L10 9L7 7ZM7 8L10 10L7 12L4 10Z" fill="#fff"/><circle cx="10.500" cy="10" r="3.500" fill="#36a84a"/></svg>
          <svg width="16" height="14"><rect x="5.500" y="4.500" width="8" height="6" fill="#ddd" stroke="#fff"/><path d="M14.500 6V9M1 3V6Q2.500 8 4 6V3M2.500 7V11H5" stroke="#fff" fill="none"/></svg>
          <svg width="16" height="14"><path d="M4.500 3.500H15V10.500H4.500ZM7 13H13M10 11V13M1 1V4H4V1M2.500 4V11H4" stroke="#fff" fill="none"/></svg>
          <svg width="15" height="14"><path d="M1 5H4L7 2V12L4 9H1Z" fill="none" stroke="#fff"/><path d="M9 5Q10.500 7 9 9M11 3.500Q13 7 11 10.500M13 2Q15.500 7 13 12" fill="none" stroke="#ccc"/></svg>
          <time class="clock">9:42 PM<br>11/6/2015</time><span class="edge"></span>
        </div>
      </div>`;
  }
}
